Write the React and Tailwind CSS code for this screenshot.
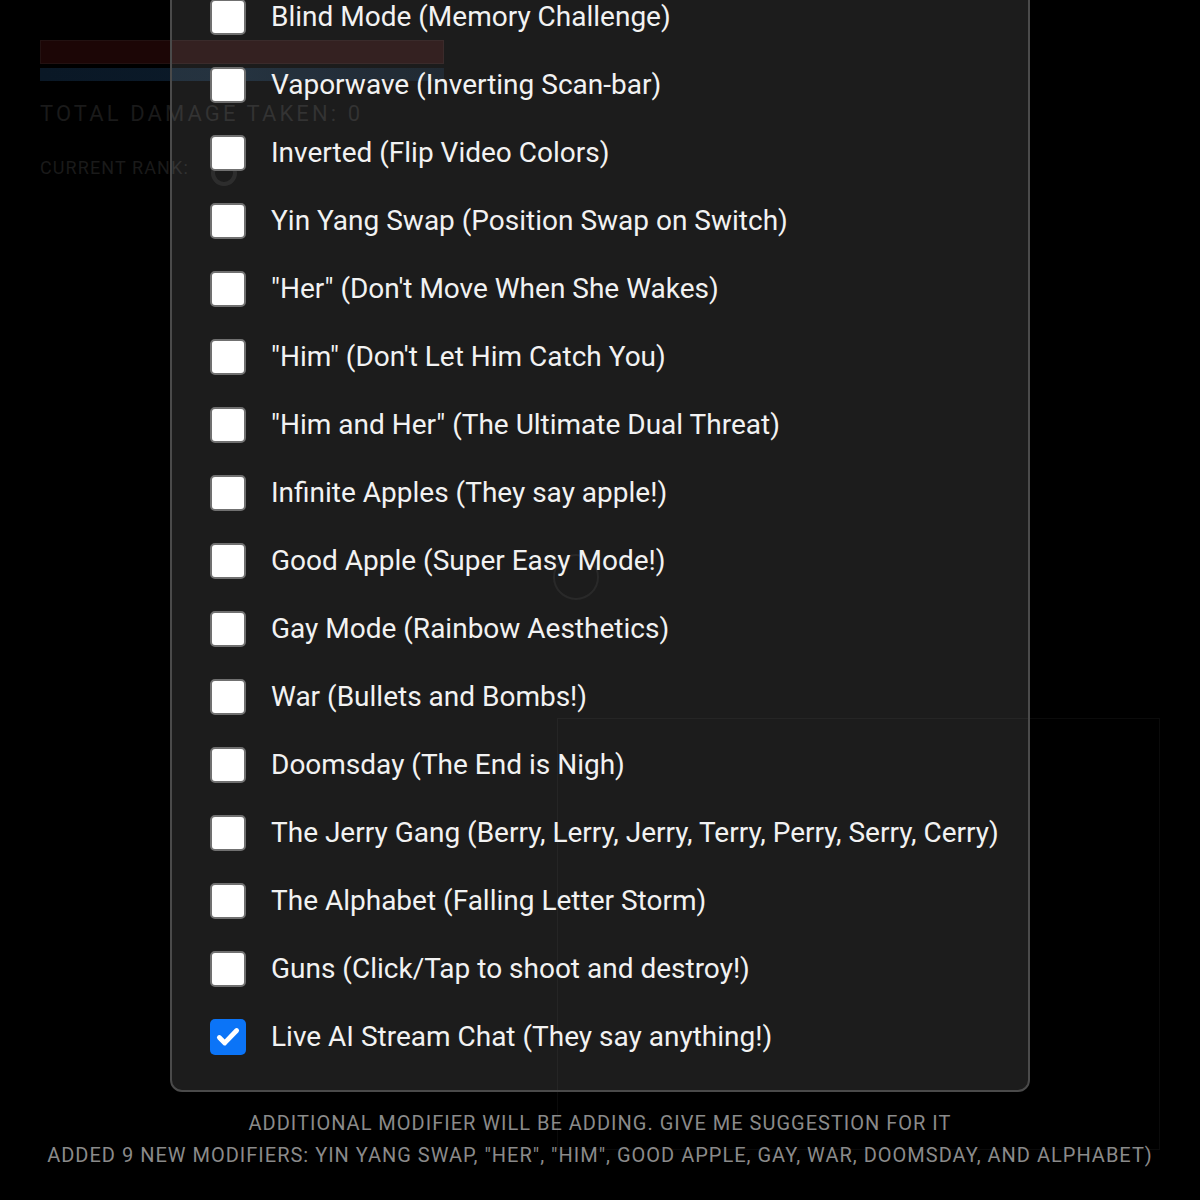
import React from "react";

const MODIFIERS = [
  { label: "Blind Mode (Memory Challenge)" },
  { label: "Vaporwave (Inverting Scan-bar)" },
  { label: "Inverted (Flip Video Colors)" },
  { label: "Yin Yang Swap (Position Swap on Switch)" },
  { label: "\"Her\" (Don't Move When She Wakes)" },
  { label: "\"Him\" (Don't Let Him Catch You)" },
  { label: "\"Him and Her\" (The Ultimate Dual Threat)" },
  { label: "Infinite Apples (They say apple!)" },
  { label: "Good Apple (Super Easy Mode!)" },
  { label: "Gay Mode (Rainbow Aesthetics)" },
  { label: "War (Bullets and Bombs!)" },
  { label: "Doomsday (The End is Nigh)" },
  { label: "The Jerry Gang (Berry, Lerry, Jerry, Terry, Perry, Serry, Cerry)" },
  { label: "The Alphabet (Falling Letter Storm)" },
  { label: "Guns (Click/Tap to shoot and destroy!)" },
  { label: "Live AI Stream Chat (They say anything!)", checked: true },
];

function Hud() {
  return (
    <div className="px-10 pt-10">
      <div className="w-[404px] h-6 bg-[#1c0606] border border-[#221111]" />
      <div className="w-[404px] h-[13px] mt-1 bg-gradient-to-r from-[#0a1826] via-[#0b1a29] to-[#06101a]" />
      <div className="mt-4 text-[22px] leading-[33px] tracking-[3.1px] text-[#1a1a1a]">
        TOTAL DAMAGE TAKEN: 0
      </div>
      <div className="mt-[18px] flex items-center">
        <span className="text-[18px] leading-[27px] tracking-[1.1px] text-[#1a1a1a]">CURRENT RANK:</span>
        <span className="ml-[22px] mt-3 w-[26px] h-[26px] rounded-full border-4 border-[#141414]" />
      </div>
    </div>
  );
}

function Checkbox({ checked }) {
  if (checked) {
    return (
      <span className="w-9 h-9 shrink-0 rounded-[5px] bg-[#0b74f7] flex items-center justify-center">
        <svg width="26" height="26" viewBox="0 0 24 24" fill="none">
          <path d="M4 12.5l5 5L20 6" stroke="#fff" strokeWidth="4.4" strokeLinecap="round" strokeLinejoin="round" />
        </svg>
      </span>
    );
  }
  return <span className="w-9 h-9 shrink-0 rounded-[5px] bg-white border-2 border-[#707070]" />;
}

function ModifierRow({ label, checked }) {
  return (
    <div className="flex items-center h-[68px] gap-[26px]">
      <Checkbox checked={checked} />
      <span className="text-[28px] text-[#f2f2f2] whitespace-nowrap -ml-px">{label}</span>
    </div>
  );
}

export default function App() {
  return (
    <div className="relative w-full h-[1200px] bg-black overflow-hidden font-['Roboto','Liberation_Sans',sans-serif]">
      <Hud />

      {/* stage leftovers behind the modal */}
      <div className="absolute left-[553px] top-[554px] w-[46px] h-[46px] rounded-full border-2 border-[#0f0f0f]" />
      <div className="absolute left-[557px] top-[718px] w-[603px] h-[432px] border border-[#0b0b0b]" />

      <div className="absolute inset-0 flex flex-col items-center">
        <div className="w-[860px] mt-[-19px] rounded-xl border-2 border-[#4a4a4a] bg-white/[0.11] pl-[38px] pr-6 pb-[19px]">
          {MODIFIERS.map((m) => (
            <ModifierRow key={m.label} label={m.label} checked={m.checked} />
          ))}
        </div>
        <div className="mt-[15px] text-center text-[20px] leading-[32px] tracking-[1px] text-[#8a8a8a] uppercase">
          <p>Additional modifier will be adding. Give me suggestion for it</p>
          <p>Added 9 new modifiers: Yin Yang Swap, "Her", "Him", Good Apple, Gay, War, Doomsday, and Alphabet)</p>
        </div>
      </div>
    </div>
  );
}
